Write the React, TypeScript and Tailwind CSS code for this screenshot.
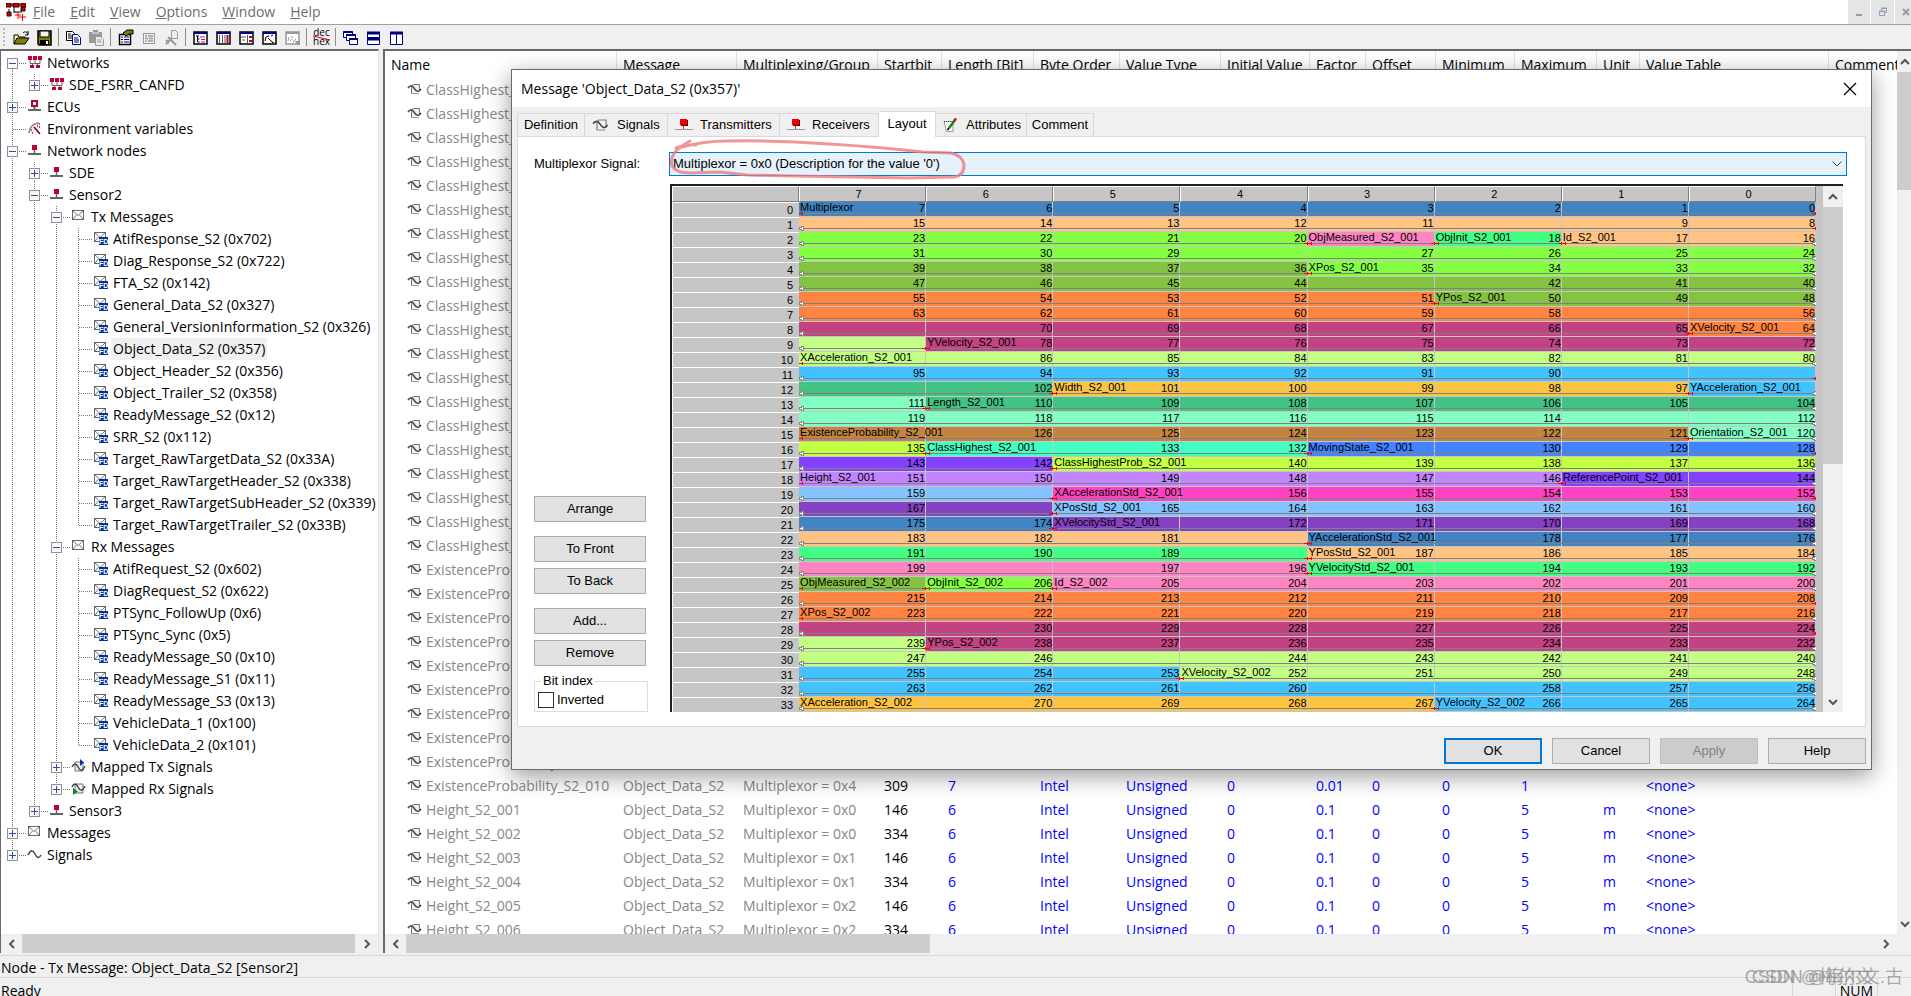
import { Fragment } from 'react';
import type { ReactNode } from 'react';

type IconName = 'network' | 'ecu' | 'env' | 'node' | 'message' | 'messageFd' | 'mappedTx' | 'mappedRx' | 'signal';

type TreeNode = {
  label: string;
  icon: IconName;
  state?: 'open' | 'closed';
  selected?: boolean;
  children?: TreeNode[];
};

type Segment = {
  span: number;
  color: string;
  name?: string;
};

const fd = (label: string, selected = false): TreeNode => ({ label, icon: 'messageFd', selected });

const tree: TreeNode[] = [
  {
    label: 'Networks',
    icon: 'network',
    state: 'open',
    children: [{ label: 'SDE_FSRR_CANFD', icon: 'network', state: 'closed' }],
  },
  { label: 'ECUs', icon: 'ecu', state: 'closed' },
  { label: 'Environment variables', icon: 'env' },
  {
    label: 'Network nodes',
    icon: 'node',
    state: 'open',
    children: [
      { label: 'SDE', icon: 'node', state: 'closed' },
      {
        label: 'Sensor2',
        icon: 'node',
        state: 'open',
        children: [
          {
            label: 'Tx Messages',
            icon: 'message',
            state: 'open',
            children: [
              fd('AtifResponse_S2 (0x702)'),
              fd('Diag_Response_S2 (0x722)'),
              fd('FTA_S2 (0x142)'),
              fd('General_Data_S2 (0x327)'),
              fd('General_VersionInformation_S2 (0x326)'),
              fd('Object_Data_S2 (0x357)', true),
              fd('Object_Header_S2 (0x356)'),
              fd('Object_Trailer_S2 (0x358)'),
              fd('ReadyMessage_S2 (0x12)'),
              fd('SRR_S2 (0x112)'),
              fd('Target_RawTargetData_S2 (0x33A)'),
              fd('Target_RawTargetHeader_S2 (0x338)'),
              fd('Target_RawTargetSubHeader_S2 (0x339)'),
              fd('Target_RawTargetTrailer_S2 (0x33B)'),
            ],
          },
          {
            label: 'Rx Messages',
            icon: 'message',
            state: 'open',
            children: [
              fd('AtifRequest_S2 (0x602)'),
              fd('DiagRequest_S2 (0x622)'),
              fd('PTSync_FollowUp (0x6)'),
              fd('PTSync_Sync (0x5)'),
              fd('ReadyMessage_S0 (0x10)'),
              fd('ReadyMessage_S1 (0x11)'),
              fd('ReadyMessage_S3 (0x13)'),
              fd('VehicleData_1 (0x100)'),
              fd('VehicleData_2 (0x101)'),
            ],
          },
          { label: 'Mapped Tx Signals', icon: 'mappedTx', state: 'closed' },
          { label: 'Mapped Rx Signals', icon: 'mappedRx', state: 'closed' },
        ],
      },
      { label: 'Sensor3', icon: 'node', state: 'closed' },
    ],
  },
  { label: 'Messages', icon: 'message', state: 'closed' },
  { label: 'Signals', icon: 'signal', state: 'closed' },
];

const seg = (span: number, color: string, name?: string): Segment => ({ span, color, name });

// One entry per byte, segments run from bit 7 down to bit 0.
const layout: Segment[][] = [
  [seg(8, '#4284c3', 'Multiplexor')],
  [seg(8, '#ffc384')],
  [seg(4, '#84ff42'), seg(1, '#ff84c3', 'ObjMeasured_S2_001'), seg(1, '#42ff84', 'ObjInit_S2_001'), seg(2, '#ffc384', 'Id_S2_001')],
  [seg(8, '#84ff42')],
  [seg(4, '#84c342'), seg(4, '#84ff42', 'XPos_S2_001')],
  [seg(8, '#84c342')],
  [seg(5, '#ff8442'), seg(3, '#84c342', 'YPos_S2_001')],
  [seg(8, '#ff8442')],
  [seg(7, '#c34284'), seg(1, '#ff8442', 'XVelocity_S2_001')],
  [seg(1, '#c3ff84'), seg(7, '#c34284', 'YVelocity_S2_001')],
  [seg(8, '#c3ff84', 'XAcceleration_S2_001')],
  [seg(8, '#42c3ff')],
  [seg(2, '#42c384'), seg(5, '#ffc342', 'Width_S2_001'), seg(1, '#42c3ff', 'YAcceleration_S2_001')],
  [seg(1, '#84ffc3'), seg(7, '#42c384', 'Length_S2_001')],
  [seg(8, '#84ffc3')],
  [seg(7, '#c38442', 'ExistenceProbability_S2_001'), seg(1, '#84ffc3', 'Orientation_S2_001')],
  [seg(1, '#c3ff42'), seg(3, '#42ffc3', 'ClassHighest_S2_001'), seg(4, '#4284ff', 'MovingState_S2_001')],
  [seg(2, '#8442ff'), seg(6, '#c3ff42', 'ClassHighestProb_S2_001')],
  [seg(6, '#c384ff', 'Height_S2_001'), seg(2, '#8442ff', 'ReferencePoint_S2_001')],
  [seg(2, '#84c3ff'), seg(6, '#ff42c3', 'XAccelerationStd_S2_001')],
  [seg(2, '#8442c3'), seg(6, '#84c3ff', 'XPosStd_S2_001')],
  [seg(2, '#4284c3'), seg(6, '#8442c3', 'XVelocityStd_S2_001')],
  [seg(4, '#ffc384'), seg(4, '#4284c3', 'YAccelerationStd_S2_001')],
  [seg(4, '#42ff84'), seg(4, '#ffc384', 'YPosStd_S2_001')],
  [seg(4, '#ff84c3'), seg(4, '#42ff84', 'YVelocityStd_S2_001')],
  [seg(1, '#84c342', 'ObjMeasured_S2_002'), seg(1, '#84ff42', 'ObjInit_S2_002'), seg(6, '#ff84c3', 'Id_S2_002')],
  [seg(8, '#ff8442')],
  [seg(8, '#ff8442', 'XPos_S2_002')],
  [seg(8, '#c34284')],
  [seg(1, '#c3ff84'), seg(7, '#c34284', 'YPos_S2_002')],
  [seg(8, '#c3ff84')],
  [seg(3, '#42c3ff'), seg(5, '#c3ff84', 'XVelocity_S2_002')],
  [seg(8, '#42c3ff')],
  [seg(5, '#ffc342', 'XAcceleration_S2_002'), seg(3, '#42c3ff', 'YVelocity_S2_002')],
];

const unlabelledBits = new Set([
  10, 19, 28, 43, 57, 71, 79, 87, 89, 88, 103, 96, 113, 127, 134, 131, 141, 145, 158, 157, 166, 173, 180, 179, 188,
  198, 195, 207, 231, 245, 259, 271,
]);

// Bytes in which a signal ends at bit 0.
const closedBytes = new Set([0, 1, 11, 16, 19, 26, 28]);

const signalNames = [
  ...Array.from({ length: 20 }, (_, i) => `ClassHighest_S2_${String(i + 1).padStart(3, '0')}`),
  ...Array.from({ length: 9 }, (_, i) => `ExistenceProbability_S2_00${i + 1}`),
];

const columns: { label: string; width: string }[] = [
  { label: 'Name', width: 'w-[232px]' },
  { label: 'Message', width: 'w-[120px]' },
  { label: 'Multiplexing/Group', width: 'w-[141px]' },
  { label: 'Startbit', width: 'w-[64px]' },
  { label: 'Length [Bit]', width: 'w-[92px]' },
  { label: 'Byte Order', width: 'w-[86px]' },
  { label: 'Value Type', width: 'w-[101px]' },
  { label: 'Initial Value', width: 'w-[89px]' },
  { label: 'Factor', width: 'w-[56px]' },
  { label: 'Offset', width: 'w-[70px]' },
  { label: 'Minimum', width: 'w-[79px]' },
  { label: 'Maximum', width: 'w-[82px]' },
  { label: 'Unit', width: 'w-[43px]' },
  { label: 'Value Table', width: 'w-[189px]' },
  { label: 'Comment', width: 'w-[100px]' },
];

const valueRow = (name: string, mux: string, start: string, length: string, factor: string, max: string, unit: string) => [
  name, 'Object_Data_S2', `Multiplexor = ${mux}`, start, length, 'Intel', 'Unsigned', '0', factor, '0', '0', max, unit, '<none>', '',
];

const valueRows = [
  valueRow('ExistenceProbability_S2_010', '0x4', '309', '7', '0.01', '1', ''),
  valueRow('Height_S2_001', '0x0', '146', '6', '0.1', '5', 'm'),
  valueRow('Height_S2_002', '0x0', '334', '6', '0.1', '5', 'm'),
  valueRow('Height_S2_003', '0x1', '146', '6', '0.1', '5', 'm'),
  valueRow('Height_S2_004', '0x1', '334', '6', '0.1', '5', 'm'),
  valueRow('Height_S2_005', '0x2', '146', '6', '0.1', '5', 'm'),
  valueRow('Height_S2_006', '0x2', '334', '6', '0.1', '5', 'm'),
];

const Envelope = () => (
  <>
    <rect x="1.5" y="1.5" width="11" height="9" fill="#fff" stroke="#666" />
    <path d="M2 2l5 4.500l5-4.500M2 10l3.500-4M12 10l-3.500-4" fill="none" stroke="#777" strokeWidth="1" />
  </>
);

const treeIcons: Record<IconName, ReactNode> = {
  network: (
    <>
      <path d="M3 4v4.500h10V4M8 4v4.500M5.500 9v2M10.500 9v2" fill="none" stroke="#666" />
      <path d="M1 1h4v4H1zM6 1h4v4H6zM11 1h4v4h-4zM3 10h4v3H3zM9 10h4v3H9z" fill="#c00030" />
    </>
  ),
  ecu: (
    <>
      <path d="M1 11h13M7.500 8v4" stroke="#666" strokeWidth="2" />
      <rect x="5" y="2" width="5" height="5" fill="#fff" stroke="#c00030" strokeWidth="2" />
    </>
  ),
  env: (
    <>
      <path d="M2 12A10 10 0 0 1 12 2v10z" fill="#eee" />
      <path d="M2 12A10 10 0 0 1 12 2" fill="none" stroke="#8a8aa8" strokeWidth="1.500" />
      <path d="M7 6l6 7" stroke="#800020" strokeWidth="1.500" />
      <path d="M5 12h1M10 5h1M12 3h1M12 6h1M4 9h1" stroke="#d00000" strokeWidth="1.500" />
    </>
  ),
  node: (
    <>
      <path d="M1 11h13" stroke="#666" strokeWidth="2" />
      <path d="M7.500 6v5" stroke="#666" strokeWidth="1.500" />
      <rect x="5" y="2" width="5" height="5" fill="#c00030" />
    </>
  ),
  message: <Envelope />,
  messageFd: (
    <>
      <Envelope />
      <rect x="6" y="6" width="9" height="8" fill="#003399" />
      <text x="6" y="13" fill="#fff" fontSize="7" fontWeight="700" fontFamily="Liberation Sans, sans-serif">
        FD
      </text>
    </>
  ),
  mappedTx: (
    <>
      <path d="M4 3h8v9H4z" fill="#eee" stroke="#777" />
      <path d="M1 8c2-4 4-4 6 0s4 5 7-1" fill="none" stroke="#444" strokeWidth="1.500" />
      <path d="M9 0l4 3.500L9 7z" fill="#0030b0" />
    </>
  ),
  mappedRx: (
    <>
      <path d="M4 3h8v9H4z" fill="#eee" stroke="#777" />
      <path d="M1 6c2-4 4-4 6 0s4 5 7-1" fill="none" stroke="#444" strokeWidth="1.500" />
      <path d="M2 7l5 3.500L2 14z" fill="#108030" />
    </>
  ),
  signal: <path d="M1 8c3-6 5-5 7-1s4 5 6 1" fill="none" stroke="#444" strokeWidth="1.500" />,
};

const SignalGlyph = ({ className = 'h-4 w-4 shrink-0' }: { className?: string }) => (
  <svg viewBox="0 0 16 16" className={className} aria-hidden="true">
    <path d="M4.500 12.500V6L6 3.500h6.500V9" fill="#f2f2f2" stroke="#777" />
    <path d="M4 12.500h8" stroke="#999" />
    <path d="M1 7c2-3 4-3 6 0s4 5 7 1" fill="none" stroke="#444" strokeWidth="1.500" />
  </svg>
);

const NodeGlyph = () => (
  <svg viewBox="0 0 18 16" className="h-4 w-[18px] shrink-0" aria-hidden="true">
    <path d="M0 12.500h18" stroke="#999" />
    <path d="M8.500 8v4" stroke="#666" />
    <path d="M6 3h7v6H6z" fill="#600" />
    <path d="M5 2h7v6H5z" fill="#e00" />
  </svg>
);

const Chevron = ({ dir }: { dir: 'up' | 'down' | 'left' | 'right' }) => (
  <svg viewBox="0 0 10 10" className="h-[10px] w-[10px] shrink-0" aria-hidden="true">
    <path
      d={{ up: 'M1 7l4-4l4 4', down: 'M1 3l4 4l4-4', left: 'M7 1L3 5l4 4', right: 'M3 1l4 4l-4 4' }[dir]}
      fill="none"
      stroke="#555"
      strokeWidth="2"
    />
  </svg>
);

const HorizontalScroll = ({ thumb }: { thumb: string }) => (
  <div className="flex h-[19px] shrink-0 bg-[#f0f0f0]">
    <button type="button" aria-label="Scroll left" className="flex w-[21px] shrink-0 items-center justify-center">
      <Chevron dir="left" />
    </button>
    <div className="flex-1">
      <div className={`h-full bg-[#cdcdcd] ${thumb}`} />
    </div>
    <button type="button" aria-label="Scroll right" className="flex w-[23px] shrink-0 items-center justify-center">
      <Chevron dir="right" />
    </button>
  </div>
);

const TreeRow = ({ node, guides, first, last }: { node: TreeNode; guides: boolean[]; first: boolean; last: boolean }) => (
  <>
    <li className="flex h-[22px] items-center whitespace-nowrap">
      {guides.map((line, i) => (
        <svg key={i} viewBox="0 0 22 22" className="h-[22px] w-[22px] shrink-0" aria-hidden="true">
          {line && <path d="M11.500 0v22" stroke="#777" strokeDasharray="1 1" />}
        </svg>
      ))}
      <svg viewBox="0 0 22 22" className="h-[22px] w-[22px] shrink-0 overflow-visible" aria-hidden="true">
        <path d={`M11.500 ${first ? 11 : 0}V${last ? 11 : 22}M12 11.500h14`} stroke="#777" strokeDasharray="1 1" />
        {node.state && (
          <>
            <rect x="6.500" y="6.500" width="10" height="10" fill="#f8f8f8" stroke="#919191" />
            <path d={node.state === 'open' ? 'M8 11.500h7' : 'M8 11.500h7M11.500 8v7'} stroke="#30509a" />
          </>
        )}
      </svg>
      <svg viewBox="0 0 16 16" className="ml-1 h-4 w-4 shrink-0" aria-hidden="true">
        {treeIcons[node.icon]}
      </svg>
      <span className={node.selected ? 'ml-[2px] bg-[#f0f0f0] px-[2px] leading-[22px]' : 'ml-[2px] px-[2px] leading-[22px]'}>
        {node.label}
      </span>
    </li>
    {node.children?.map((child, i) => (
      <TreeRow
        key={child.label}
        node={child}
        guides={[...guides, !last]}
        first={false}
        last={i === node.children!.length - 1}
      />
    ))}
  </>
);

const WindowGlyph = ({ children, off = false }: { children: ReactNode; off?: boolean }) => (
  <>
    <rect x="2" y="3" width="13" height="12" fill="#fff" stroke={off ? '#999' : '#000'} strokeWidth="1.500" />
    <path d="M2 4h13" stroke={off ? '#999' : '#000080'} strokeWidth="2" />
    {children}
  </>
);

const toolGroups: { label: string; icon: ReactNode }[][] = [
  [
    {
      label: 'Open',
      icon: (
        <>
          <path d="M1 15V6h4l1 2h6v2" fill="#ffffa0" stroke="#000" />
          <path d="M1 15l3-6h12l-4 6z" fill="#808000" stroke="#000" />
          <path d="M10 4c2-2 4-1 5 1M15 2v4h-3" fill="none" stroke="#000" />
        </>
      ),
    },
    {
      label: 'Save',
      icon: (
        <>
          <path d="M2 2h13v14H3l-1-1z" fill="#808000" stroke="#000" strokeWidth="1.500" />
          <path d="M4 2h9v6H4z" fill="#f0f0f0" stroke="#000" />
          <path d="M4 11h9v5H4z" fill="#000" />
          <path d="M10 12h2v3h-2z" fill="#fff" />
        </>
      ),
    },
  ],
  [
    {
      label: 'Copy',
      icon: (
        <>
          <path d="M1.500 2.500h6l2 2v7h-8z" fill="#fff" stroke="#000" />
          <path d="M3 5h3M3 7h4M3 9h4" stroke="#000" />
          <path d="M7.500 5.500h5l3 3v7h-8z" fill="#fff" stroke="#000080" />
          <path d="M9 9h4M9 11h5M9 13h5" stroke="#000080" />
        </>
      ),
    },
    {
      label: 'Paste',
      icon: (
        <>
          <path d="M1 3h4V1h5v2h4v11H1z" fill="#999" />
          <path d="M4 4h7" stroke="#eee" />
          <path d="M7.500 7.500h5l3 3v6h-8z" fill="#eee" stroke="#999" />
          <path d="M9 11h4M9 13h5" stroke="#999" />
        </>
      ),
    },
  ],
  [
    {
      label: 'Edit object',
      icon: (
        <>
          <path d="M2.500 5.500h11v10h-11z" fill="#fff" stroke="#000" strokeWidth="1.500" />
          <path d="M4 8h2M7 8h5M4 10.500h2M7 10.500h5M4 13h2M7 13h5" stroke="#000080" />
          <path d="M6 4l3 3l3-2h4V1h-6z" fill="#808000" stroke="#000" />
        </>
      ),
    },
    {
      label: 'Edit list',
      icon: (
        <>
          <rect x="3.500" y="4.500" width="11" height="10" fill="none" stroke="#999" />
          <path d="M5 7h2M8 7h5M5 9.500h3M9 9.500h4M5 12h2M8 12h5" stroke="#999" strokeWidth="1.500" />
        </>
      ),
    },
    {
      label: 'Check consistency',
      icon: (
        <>
          <path d="M8.500 1.500h4l2 2v6h-6z" fill="#eee" stroke="#999" />
          <path d="M9 9l-6 6M5 8l8 8M3 11l3 3" stroke="#999" strokeWidth="2" />
        </>
      ),
    },
  ],
  [
    {
      label: 'Overview window',
      icon: (
        <WindowGlyph>
          <path d="M4 7h3M5.500 7v6h2M5.500 10h2" fill="none" stroke="#000" />
          <path d="M8 8h5M9 10.500h4M9 13h4" stroke="#c000c0" />
        </WindowGlyph>
      ),
    },
    {
      label: 'List window',
      icon: (
        <WindowGlyph>
          <path d="M4.500 6v8M7.500 6v8M10 6v8" stroke="#555" />
          <path d="M12.500 6v8" stroke="#c00030" strokeWidth="2" />
        </WindowGlyph>
      ),
    },
    {
      label: 'Communication matrix',
      icon: (
        <WindowGlyph>
          <path d="M3 8h5M9.500 6v8M4 11h3" stroke="#555" />
          <path d="M11 8h3M11 12h3" stroke="#c00030" strokeWidth="2" />
        </WindowGlyph>
      ),
    },
    {
      label: 'Value tables',
      icon: (
        <WindowGlyph>
          <path d="M4 12l1-4l3-1M10 7l2-1M7 9l5 5" fill="none" stroke="#000" />
          <path d="M9 11l4 3" stroke="#c00030" />
        </WindowGlyph>
      ),
    },
    {
      label: 'Attribute definitions',
      icon: (
        <WindowGlyph off>
          <path d="M4 12l1-4M7 8h2M6 12l2-2M9 13l3-3" fill="none" stroke="#999" />
          <path d="M11 12h5v4h-3z" fill="#999" />
        </WindowGlyph>
      ),
    },
  ],
];

const windowTools: { label: string; icon: ReactNode }[] = [
  {
    label: 'Cascade',
    icon: (
      <g fill="#fff" stroke="#000080">
        <path d="M1.500 2.500h9v6h-9z" />
        <path d="M1.500 3h9" strokeWidth="2" />
        <path d="M4.500 5.500h9v6h-9z" />
        <path d="M4.500 6h9" strokeWidth="2" />
        <path d="M7.500 9.500h8v6h-8z" />
        <path d="M7.500 10h8" strokeWidth="2" />
      </g>
    ),
  },
  {
    label: 'Tile horizontally',
    icon: (
      <g fill="#fff" stroke="#000080">
        <path d="M2.500 3.500h12v5h-12zM2.500 10.500h12v5h-12z" />
        <path d="M2 4h13M2 10h13" strokeWidth="3" />
      </g>
    ),
  },
  {
    label: 'Tile vertically',
    icon: (
      <g fill="#fff" stroke="#000080">
        <path d="M2.500 3.500h6v12h-6zM8.500 3.500h6v12h-6z" />
        <path d="M2 4h13" strokeWidth="3" />
      </g>
    ),
  },
];

const ToolButton = ({ label, children }: { label: string; children: ReactNode }) => (
  <button type="button" aria-label={label} className="flex h-[23px] w-[23px] shrink-0 items-center justify-center">
    {children}
  </button>
);

const ToolSeparator = () => <span className="mx-[2px] h-[18px] w-[2px] shrink-0 border-l border-[#8c8c8c]" />;

const MenuBar = () => (
  <header className="flex h-[25px] shrink-0 items-center border-b border-[#a0a0a0] bg-white pl-[6px] text-[#6d6d6d]">
    <svg viewBox="0 0 20 18" className="h-[18px] w-5 shrink-0" aria-hidden="true">
      <path d="M2 2h16M3 6v6M8 4v6M8 9h8M17 4v4" fill="none" stroke="#000" />
      <path d="M0 0h5v4H0zM7 0h6v4H7zM15 0h5v4h-5zM1 9h4v4H1zM15 4h4v4h-4z" fill="#c00" stroke="#300" />
      <path d="M9 12h6M12 9v7M13 14h7M16.500 11v7" stroke="#e00" />
    </svg>
    <nav className="ml-[7px] flex flex-1 gap-[15px]">
      {['File', 'Edit', 'View', 'Options', 'Window', 'Help'].map((item) => (
        <button key={item} type="button" className="leading-5">
          <span className="underline">{item[0]}</span>
          {item.slice(1)}
        </button>
      ))}
    </nav>
    <div className="-mr-[6px] flex h-full shrink-0 gap-px text-[#8fa0b0]">
      <button type="button" aria-label="Minimize" className="flex w-[22px] items-center justify-center bg-[#e5e5e5]">
        <svg viewBox="0 0 10 10" className="h-[10px] w-[10px]"><path d="M2 8h6" stroke="currentColor" strokeWidth="2" /></svg>
      </button>
      <button type="button" aria-label="Restore" className="flex w-[23px] items-center justify-center bg-[#e5e5e5]">
        <svg viewBox="0 0 10 10" className="h-[10px] w-[10px]">
          <path d="M3.500 3V1.500h5v4H7M1.500 4.500h5v4h-5zM1 4h6M3 1h6" fill="none" stroke="currentColor" />
        </svg>
      </button>
      <button type="button" aria-label="Close" className="flex w-[22px] items-center justify-center bg-[#e5e5e5]">
        <svg viewBox="0 0 10 10" className="h-[10px] w-[10px]"><path d="M2 2l6 6M8 2L2 8" stroke="currentColor" strokeWidth="2" /></svg>
      </button>
    </div>
  </header>
);

const Toolbar = () => (
  <div className="flex h-6 shrink-0 items-center bg-[#f0f0f0]" role="toolbar">
    <span className="mr-[5px] ml-[3px] h-[18px] border-l-2 border-dotted border-[#bbb]" />
    {toolGroups.map((group, i) => (
      <Fragment key={i}>
        {group.map((tool) => (
          <ToolButton key={tool.label} label={tool.label}>
            <svg viewBox="0 0 17 17" className="h-[17px] w-[17px]">{tool.icon}</svg>
          </ToolButton>
        ))}
        <ToolSeparator />
      </Fragment>
    ))}
    <button type="button" className="relative flex w-[23px] shrink-0 flex-col items-center text-[10px] leading-[9px] text-black">
      <span>dec</span>
      <span>hex</span>
      <svg viewBox="0 0 17 8" className="absolute top-[6px] h-2 w-[17px]" aria-hidden="true">
        <path d="M0 2l17 4" stroke="#e00" />
      </svg>
    </button>
    <ToolSeparator />
    {windowTools.map((tool) => (
      <ToolButton key={tool.label} label={tool.label}>
        <svg viewBox="0 0 17 17" className="h-[17px] w-[17px]">{tool.icon}</svg>
      </ToolButton>
    ))}
  </div>
);

const SignalList = () => (
  <section className="flex min-w-0 flex-1 flex-col border-t-2 border-l-2 border-[#696969] bg-white">
    <div className="flex min-h-0 flex-1">
      <div className="min-w-0 flex-1 overflow-hidden">
        <table className="w-[1544px] table-fixed border-separate border-spacing-0 whitespace-nowrap">
          <thead>
            <tr className="h-[26px]">
              {columns.map((column) => (
                <th key={column.label} className={`border-r border-[#e5e5e5] p-0 pl-[6px] text-left font-normal ${column.width}`}>
                  {column.label}
                </th>
              ))}
            </tr>
          </thead>
          <tbody>
            {signalNames.map((name) => (
              <tr key={name} className="h-6 text-[#868686]">
                <td className="overflow-hidden p-0 pl-[22px]" colSpan={15}>
                  <div className="flex items-center gap-[3px]">
                    <SignalGlyph />
                    {name}
                  </div>
                </td>
              </tr>
            ))}
            {valueRows.map((row) => (
              <tr key={row[0]} className="h-6 text-[#0000ff]">
                <td className="p-0 pl-[22px] text-[#868686]">
                  <div className="flex items-center gap-[3px]">
                    <SignalGlyph />
                    {row[0]}
                  </div>
                </td>
                {row.slice(1).map((value, i) => (
                  <td
                    key={columns[i + 1].label}
                    className={i < 2 ? 'p-0 pl-[6px] text-[#868686]' : i === 2 ? 'p-0 pl-[6px] text-black' : 'p-0 pl-[6px]'}
                  >
                    {value}
                  </td>
                ))}
              </tr>
            ))}
          </tbody>
        </table>
      </div>
      <div className="flex w-[14px] shrink-0 flex-col overflow-hidden bg-[#f0f0f0]">
        <button type="button" aria-label="Scroll up" className="flex h-[21px] shrink-0 items-center pl-[3px]">
          <Chevron dir="up" />
        </button>
        <div className="flex-1">
          <div className="h-[14%] bg-[#cdcdcd]" />
        </div>
        <button type="button" aria-label="Scroll down" className="flex h-[21px] shrink-0 items-center pl-[3px]">
          <Chevron dir="down" />
        </button>
      </div>
    </div>
    <div className="bg-[#f0f0f0] pr-[14px]">
      <HorizontalScroll thumb="w-[524px]" />
    </div>
  </section>
);

const Marker = ({ side, closed }: { side: 'left' | 'right'; closed: boolean }) => (
  <svg
    viewBox="0 0 5 5"
    shapeRendering="crispEdges"
    className={side === 'left' ? 'absolute top-[9px] left-0 h-[5px] w-[5px]' : 'absolute top-[9px] -right-px h-[5px] w-[5px]'}
    aria-hidden="true"
  >
    {closed ? (
      <path d={side === 'left' ? 'M0 2h3V1h1v3H3V3H0z' : 'M5 1H4v1H1v1h3v1h1z'} fill="#f00" stroke="none" />
    ) : (
      <>
        <path d={side === 'left' ? 'M0 1h2V0h3v5H2V4H0z' : 'M5 0H3v1H1v3h2v1h2z'} fill="#888" />
        <path d={side === 'left' ? 'M1 2h2V1h1v3H3V3H1z' : 'M4 1v1H2v1h2v1h1V1z'} fill="#fff" />
      </>
    )}
  </svg>
);

const BitRow = ({ byte, segments }: { byte: number; segments: Segment[] }) => {
  const cells = segments.flatMap((segment, segmentIndex) =>
    Array.from({ length: segment.span }, (_, i) => ({ segment, segmentIndex, i }))
  );

  return (
    <tr className="h-[15px]">
      <th className="border-t border-l border-white bg-[#c6c6c6] p-0 pr-[6px] text-right leading-[13px] font-normal">{byte}</th>
      {cells.map(({ segment, segmentIndex, i }, column) => {
        const bit = byte * 8 + 7 - column;
        const isLast = i === segment.span - 1;
        const lastSegment = segmentIndex === segments.length - 1;
        return (
          <td
            key={bit}
            className="relative border-r border-b border-[#c6c6c6] p-0 text-right align-top leading-[13px]"
            style={{ backgroundColor: segment.color }}
          >
            {!unlabelledBits.has(bit) && <span className="relative z-10">{bit}</span>}
            <span className="absolute top-[11px] -right-px left-0 h-px bg-[#808080]" />
            {i === 0 && segment.name && (
              <span className="absolute top-0 left-px z-10 leading-[10px] whitespace-nowrap">{segment.name}</span>
            )}
            {i === 0 && <Marker side="left" closed={segmentIndex > 0 || (!!segment.name && byte !== 33)} />}
            {isLast && <Marker side="right" closed={!lastSegment || closedBytes.has(byte)} />}
          </td>
        );
      })}
    </tr>
  );
};

const BitGrid = () => (
  <div className="mr-1 ml-px flex flex-1 border-t-2 border-l-2 border-[#202020]">
    <div className="flex-1 bg-[#c6c6c6] pr-[7px]">
      <table className="w-full table-fixed border-separate border-spacing-0 text-[11px] text-black">
        <thead>
          <tr className="h-4">
            <th className="border border-white border-r-[#808080] border-b-[#808080] bg-[#c6c6c6] p-0" />
            {[7, 6, 5, 4, 3, 2, 1, 0].map((bit) => (
              <th
                key={bit}
                className="border border-white border-r-[#808080] border-b-[#808080] bg-[#c6c6c6] p-0 pr-2 text-center leading-[14px] font-normal"
              >
                {bit}
              </th>
            ))}
          </tr>
        </thead>
        <tbody>
          {layout.map((segments, byte) => (
            <BitRow key={byte} byte={byte} segments={segments} />
          ))}
        </tbody>
      </table>
    </div>
    <div className="flex w-5 shrink-0 flex-col bg-[#f0f0f0]">
      <button type="button" aria-label="Scroll grid up" className="flex h-[21px] items-center justify-center">
        <Chevron dir="up" />
      </button>
      <div className="flex-1">
        <div className="h-[53%] bg-[#cdcdcd]" />
      </div>
      <button type="button" aria-label="Scroll grid down" className="flex h-[21px] items-center justify-center">
        <Chevron dir="down" />
      </button>
    </div>
  </div>
);

const tabs: { label: string; width: string; icon?: ReactNode }[] = [
  { label: 'Definition', width: 'w-[68px]' },
  { label: 'Signals', width: 'w-[83px]', icon: <SignalGlyph className="h-[18px] w-[18px] shrink-0" /> },
  { label: 'Transmitters', width: 'w-[112px]', icon: <NodeGlyph /> },
  { label: 'Receivers', width: 'w-[99px]', icon: <NodeGlyph /> },
  { label: 'Layout', width: 'w-[57px]' },
  {
    label: 'Attributes',
    width: 'w-[91px]',
    icon: (
      <svg viewBox="0 0 16 16" className="h-4 w-4 shrink-0" aria-hidden="true">
        <path d="M1 4.500h9v10H3.500z" fill="#fff" stroke="#999" />
        <path d="M1 4.500h10" stroke="#444" strokeDasharray="1 1" />
        <path d="M6 11l6-8" stroke="#208020" strokeWidth="2.500" />
        <path d="M11.500 3.500l1.500-2" stroke="#e00" strokeWidth="2.500" />
        <path d="M4.500 13l1.500-2" stroke="#000" strokeWidth="1.500" />
      </svg>
    ),
  },
  { label: 'Comment', width: 'w-[67px]' },
];

const PushButton = ({ children, className }: { children: string; className: string }) => (
  <button type="button" disabled={children === 'Apply'} className={`h-[26px] ${className}`}>
    {children}
  </button>
);

const sideButton = 'w-28 border border-[#adadad] bg-[#e1e1e1]';

const MessageDialog = () => (
  <div
    role="dialog"
    aria-label="Message 'Object_Data_S2 (0x357)'"
    className="absolute top-[69px] right-[39px] left-[511px] border border-[#6b6b6b] bg-[#f0f0f0] font-['Liberation_Sans',Arial,sans-serif] text-[13px] text-black shadow-[0_6px_22px_rgba(0,0,0,0.4)]"
  >
    <div className="flex h-[37px] items-center justify-between bg-white pr-[14px] pl-[9px] font-['Open_Sans',sans-serif] text-[14px]">
      <h2>Message 'Object_Data_S2 (0x357)'</h2>
      <button type="button" aria-label="Close dialog">
        <svg viewBox="0 0 14 14" className="h-[14px] w-[14px]">
          <path d="M1 1l12 12M13 1L1 13" stroke="#000" strokeWidth="1.200" />
        </svg>
      </button>
    </div>

    <div className="px-[5px]">
      <div role="tablist" className="flex items-end pt-1">
        {tabs.map((tab) => (
          <button
            key={tab.label}
            type="button"
            role="tab"
            aria-selected={tab.label === 'Layout'}
            className={`flex items-center gap-[7px] border-t border-r border-[#d9d9d9] ${
              tab.label === 'Layout' ? '-mb-px h-[26px] bg-white pb-[2px]' : 'h-[23px]'
            } ${tab.icon ? 'pl-[7px]' : 'justify-center'} ${tab.label === 'Definition' ? 'border-l' : ''} ${tab.width}`}
          >
            {tab.icon}
            {tab.label}
          </button>
        ))}
      </div>

      <div className="border border-[#d9d9d9] bg-white pt-[15px] pr-[18px] pb-[14px] pl-4">
        <div className="flex items-center">
          <label htmlFor="multiplexor" className="w-[135px] shrink-0">
            Multiplexor Signal:
          </label>
          <div className="relative flex-1">
            <select
              id="multiplexor"
              className="block h-6 w-full appearance-none border border-[#0078d7] bg-[#e5f1fb] pl-[3px] text-[13px] outline-none"
            >
              <option>Multiplexor = 0x0 (Description for the value '0')</option>
            </select>
            <svg viewBox="0 0 10 6" className="pointer-events-none absolute top-[9px] right-[5px] h-[6px] w-[10px]" aria-hidden="true">
              <path d="M.5.500L5 5L9.500.500" fill="none" stroke="#444" />
            </svg>
          </div>
        </div>

        <div className="mt-2 flex">
          <div className="flex w-[135px] shrink-0 flex-col justify-end">
            <div className="flex flex-col">
              <PushButton className={sideButton}>Arrange</PushButton>
              <PushButton className={`mt-[14px] ${sideButton}`}>To Front</PushButton>
              <PushButton className={`mt-[6px] ${sideButton}`}>To Back</PushButton>
              <PushButton className={`mt-[14px] ${sideButton}`}>Add...</PushButton>
              <PushButton className={`mt-[6px] ${sideButton}`}>Remove</PushButton>
            </div>
            <fieldset className="mt-2 w-[114px] border border-[#dcdcdc] px-[3px] pb-[3px]">
              <legend className="ml-[3px] px-[2px] leading-[14px]">Bit index</legend>
              <label className="flex items-center gap-[3px] pt-1 leading-4">
                <input type="checkbox" className="h-4 w-4 appearance-none border border-[#333] bg-white" />
                Inverted
              </label>
            </fieldset>
          </div>
          <BitGrid />
        </div>
      </div>

      <div className="flex justify-end gap-[10px] pt-[11px] pb-[5px]">
        <PushButton className="w-[98px] border-2 border-[#0078d7] bg-[#e1e1e1]">OK</PushButton>
        <PushButton className="w-[98px] border border-[#adadad] bg-[#e1e1e1]">Cancel</PushButton>
        <PushButton className="w-[98px] border border-[#bfbfbf] bg-[#cccccc] text-[#838383]">Apply</PushButton>
        <PushButton className="w-[98px] border border-[#adadad] bg-[#e1e1e1]">Help</PushButton>
      </div>
    </div>

    {/* Hand-drawn marker around the selected multiplexor value */}
    <svg
      viewBox="660 135 310 50"
      className="pointer-events-none absolute top-[65px] left-[148px] z-20 h-[50px] w-[310px]"
      aria-hidden="true"
    >
      <path
        d="M676 148q10-4 20-3M682 147q22-6 45-6q50-1 102 3q50 3 94 8l28 1q12 3 13 12q0 11-10 12l-44 1q-60-1-118-2l-45-1q-18-2-28-3l-29 1q-14 0-18-7q-2-8 4-15q6-6 14-10"
        fill="none"
        stroke="#ee7b7b"
        strokeOpacity="0.800"
        strokeWidth="3"
        strokeLinecap="round"
      />
    </svg>
  </div>
);

export default function App() {
  return (
    <div className="relative flex h-screen flex-col overflow-hidden bg-[#f0f0f0] font-['Open_Sans',sans-serif] text-[14px] text-black">
      <MenuBar />
      <Toolbar />

      <main className="flex min-h-0 flex-1">
        <aside className="mr-1 flex w-[379px] shrink-0 flex-col border-t-2 border-r border-l border-[#696969] border-r-[#e3e3e3] bg-white">
          <ul className="min-h-0 flex-1 overflow-hidden pt-px">
            {tree.map((node, i) => (
              <TreeRow key={node.label} node={node} guides={[]} first={i === 0} last={i === tree.length - 1} />
            ))}
          </ul>
          <HorizontalScroll thumb="w-full" />
        </aside>
        <SignalList />
      </main>

      <footer className="mt-[2px] h-[41px] shrink-0">
        <p className="h-[23px] border-t border-b border-[#d7d7d7] pl-px leading-[24px]">
          Node - Tx Message: Object_Data_S2 [Sensor2]
        </p>
        <div className="flex leading-[25px]">
          <span className="flex-1 pl-px">Ready</span>
          <span className="w-[43px] border-l border-[#d7d7d7]" />
          <span className="mr-[33px] w-[43px] border-r border-l border-[#d7d7d7] text-center">NUM</span>
        </div>
      </footer>

      <MessageDialog />

      <div className="pointer-events-none absolute right-2 bottom-2 flex font-['Liberation_Sans','Noto_Sans_CJK_SC',sans-serif] text-[18px] leading-[22px] text-[#8a8a8a]/70">
        <span>CSDN @梅尔文.古</span>
        <span className="absolute top-0 -left-[7px] whitespace-nowrap" aria-hidden="true">CSDN @梅尔文</span>
      </div>
    </div>
  );
}
